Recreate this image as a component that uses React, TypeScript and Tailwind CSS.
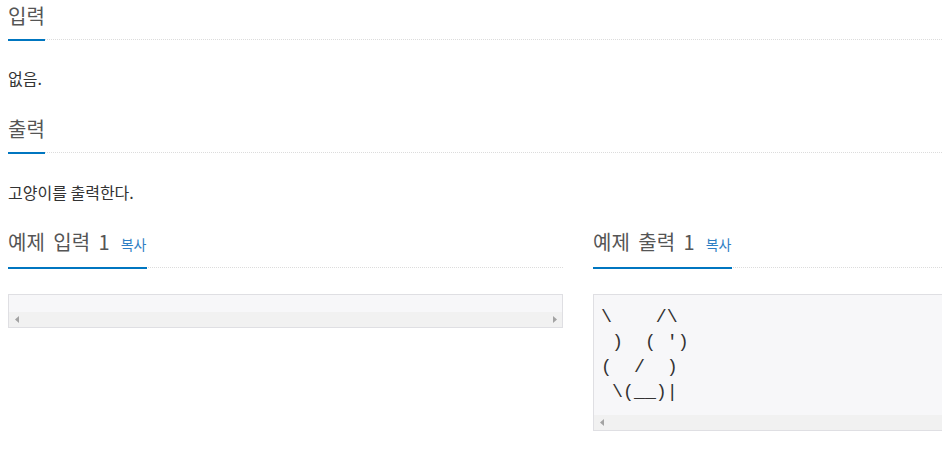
import React from "react";

type HeadlineProps = {
  title: string;
  copy?: boolean;
};

function Headline({ title, copy }: HeadlineProps) {
  return (
    <div className="flex border-b border-dotted border-[#dcdcdc]">
      <h2 className="-mb-[2px] border-b-2 border-[#0076c0] pb-[7px] text-[20px] leading-[32px] font-normal text-[#555] [word-spacing:4px]">
        {title}
        {copy && (
          <span className="ml-[11px] mr-px text-[14px] text-[#2f7fc4] [word-spacing:0px]">
            복사
          </span>
        )}
      </h2>
    </div>
  );
}

// fake horizontal scrollbar (track only, nothing to scroll)
function ScrollTrack() {
  return (
    <div className="flex h-[15px] items-center justify-between bg-[#f1f1f1]">
      <div className="flex w-[15px] justify-center">
        <svg width="4" height="7" viewBox="0 0 4 7">
          <polygon points="4,0 4,7 0,3.5" fill="#a3a3a3" />
        </svg>
      </div>
      <div className="flex w-[15px] justify-center">
        <svg width="4" height="7" viewBox="0 0 4 7">
          <polygon points="0,0 0,7 4,3.5" fill="#a3a3a3" />
        </svg>
      </div>
    </div>
  );
}

const catOutput = ["\\    /\\", " )  ( ')", "(  /  )", " \\(__)|"].join("\n");

export default function App() {
  return (
    <div className="w-full overflow-hidden bg-white">
      <div className="w-[1156px] px-2 font-['Noto_Sans_CJK_KR','Noto_Sans',sans-serif] text-[#333]">
        {/* 입력 */}
        <section>
          <div className="mb-[27px]">
            <Headline title="입력" />
          </div>
          <p className="mb-[24px] text-[16px] leading-[22px]">없음.</p>
        </section>

        {/* 출력 */}
        <section>
          <div className="mb-[28px]">
            <Headline title="출력" />
          </div>
          <p className="mb-[23px] text-[16px] leading-[22px]">
            고양이를 출력한다.
          </p>
        </section>

        {/* 예제 */}
        <div className="grid grid-cols-2 gap-[30px]">
          <section>
            <div className="mb-[26px]">
              <Headline title="예제 입력 1" copy />
            </div>
            <div className="border border-[#dfdfe3] bg-[#f7f7f9]">
              <pre className="px-[7px] py-[8.5px] font-['Liberation_Mono',monospace] text-[18.3px] leading-[25px] text-[#333]"></pre>
              <ScrollTrack />
            </div>
          </section>
          <section>
            <div className="mb-[26px]">
              <Headline title="예제 출력 1" copy />
            </div>
            <div className="border border-[#dfdfe3] bg-[#f7f7f9]">
              <pre className="px-[7px] py-[10px] font-['Liberation_Mono',monospace] text-[18.3px] leading-[25px] text-[#333]">
                {catOutput}
              </pre>
              <ScrollTrack />
            </div>
          </section>
        </div>
      </div>
    </div>
  );
}
